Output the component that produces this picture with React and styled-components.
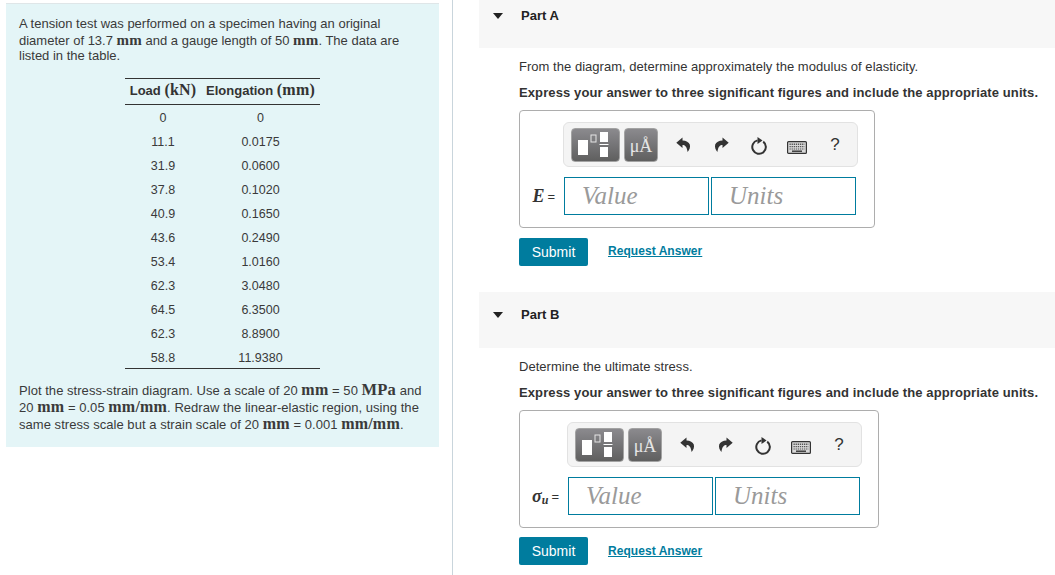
import styled, { createGlobalStyle } from 'styled-components';

const GlobalStyle = createGlobalStyle`
    html, body {
        margin: 0;
        padding: 0;
        background: #fff;
        overflow: hidden;
    }
    body {
        font-family: 'Liberation Sans', Arial, sans-serif;
        color: #333;
    }
`;

const Page = styled.div`
    display: flex;
    width: 1055px;
    height: 575px;
    overflow: hidden;
`;

const ProblemColumn = styled.div`
    width: 453px;
    height: 575px;
    padding: 3px 0 0 6px;
    box-sizing: border-box;
    border-right: 1px solid #c9d5dc;
    flex-shrink: 0;
`;

const ProblemPanel = styled.section`
    width: 433px;
    height: 444px;
    box-sizing: border-box;
    padding: 12px 13px 0;
    background: #e4f5f7;
    border-top: 1px solid #dfe6e8;
`;

const Para = styled.div`
    margin-top: ${(p) => p.$top || 0}px;
    font-size: 13px;
    color: #3a3a3a;
`;

const ParaLine = styled.div`
    height: ${(p) => p.$line || 16}px;
    line-height: ${(p) => p.$line || 16}px;
    letter-spacing: ${(p) => p.$spacing || 0}px;
    white-space: nowrap;
`;

const Unit = styled.span`
    font-family: 'Liberation Serif', 'Times New Roman', serif;
    font-weight: 700;
    font-size: ${(p) => p.$size || 15}px;
    letter-spacing: 0.2px;
`;

const DataTable = styled.table`
    width: 195px;
    margin: 14px auto 0;
    border-collapse: collapse;
    table-layout: fixed;
    border-top: 1px solid #333;
    border-bottom: 1px solid #333;
`;

const HeadCell = styled.th`
    width: ${(p) => p.$width}px;
    height: 26px;
    padding: 0 0 4px;
    box-sizing: border-box;
    font-size: 13px;
    font-weight: 700;
    text-align: center;
    color: #333;
    white-space: nowrap;
    border-bottom: 1px solid #333;
`;

const Cell = styled.td`
    height: 24px;
    padding: 3px 0 0;
    box-sizing: border-box;
    font-size: 12.5px;
    text-align: center;
    color: #3a3a3a;
`;

const PartsColumn = styled.main`
    flex: 1;
    padding-left: 26px;
    min-width: 0;
`;

const PartHeader = styled.header`
    display: flex;
    align-items: flex-start;
    height: ${(p) => (p.$first ? 48 : 56)}px;
    margin-top: ${(p) => (p.$first ? 0 : 26)}px;
    padding-top: ${(p) => (p.$first ? 8 : 15)}px;
    box-sizing: border-box;
    background: #f7f7f7;
`;

const Caret = styled.span`
    width: 0;
    height: 0;
    margin: 5px 18px 0 14px;
    border-left: 5px solid transparent;
    border-right: 5px solid transparent;
    border-top: 6px solid #222;
`;

const PartTitle = styled.h2`
    margin: 0;
    font-size: 13px;
    line-height: 16px;
    font-weight: 700;
    color: #222;
`;

const PartBody = styled.div`
    padding: 11px 0 0 40px;
`;

const Line = styled.p`
    margin: 0 0 ${(p) => (p.$bold ? 9 : 10)}px;
    font-size: 13px;
    line-height: 16px;
    font-weight: ${(p) => (p.$bold ? 700 : 400)};
    letter-spacing: ${(p) => (p.$bold ? 0.11 : 0.03)}px;
    color: #333;
    white-space: nowrap;
`;

const AnswerBox = styled.div`
    display: inline-grid;
    grid-template-columns: ${(p) => p.$label}px 292px;
    row-gap: 10px;
    padding: 11px 18px 12px 0;
    border: 1px solid #adadad;
    border-radius: 4px;
    vertical-align: top;
`;

const Toolbar = styled.div`
    grid-column: 2;
    display: flex;
    align-items: center;
    width: 295px;
    height: 45px;
    margin-left: -1px;
    padding-left: 7px;
    box-sizing: border-box;
    background: #f4f4f4;
    border: 1px solid #e2e2e2;
    border-radius: 6px;
`;

const PaletteButton = styled.div`
    display: flex;
    align-items: center;
    justify-content: center;
    width: ${(p) => p.$width}px;
    height: 34px;
    margin-right: ${(p) => p.$gap || 0}px;
    padding-top: ${(p) => p.$drop || 0}px;
    box-sizing: border-box;
    border: 1px solid #a3a3a3;
    border-radius: 4px;
    background: linear-gradient(#8b8a8e, #5f5f5f);
    color: #e6e6e6;
    font-family: 'Liberation Serif', 'Times New Roman', serif;
    font-size: 18px;
    flex-shrink: 0;
`;

const ToolIcon = styled.div`
    display: flex;
    align-items: center;
    justify-content: center;
    width: 38px;
    height: 34px;
    padding-top: ${(p) => p.$drop || 0}px;
    box-sizing: border-box;
    color: #333;
    font-size: 17px;
    flex-shrink: 0;
`;

const Label = styled.div`
    display: flex;
    align-items: center;
    justify-content: flex-end;
    padding-right: 9px;
    font-size: 13px;
    color: #333;
`;

const MathVar = styled.span`
    font-family: 'Liberation Serif', 'Times New Roman', serif;
    font-style: italic;
    font-weight: 700;
    font-size: 18px;
    margin-right: 3px;
    sub {
        font-size: 12px;
        line-height: 0;
        vertical-align: -2px;
    }
`;

const Fields = styled.div`
    display: flex;
    gap: 2px;
`;

const Field = styled.div`
    width: 145px;
    height: 38px;
    box-sizing: border-box;
    padding-left: 17px;
    border: 1px solid #007c9e;
    background: #fff;
    font-family: 'Liberation Serif', 'Times New Roman', serif;
    font-style: italic;
    font-size: 25px;
    line-height: 36px;
    color: #9a9a9a;
`;

const ActionRow = styled.div`
    display: flex;
    align-items: center;
    gap: 20px;
    margin-top: ${(p) => p.$top}px;
`;

const SubmitButton = styled.button`
    width: 69px;
    height: 28px;
    padding: 0;
    border: 0;
    border-radius: 2px;
    background: #007c9e;
    color: #fff;
    font-family: inherit;
    font-size: 14px;
`;

const RequestLink = styled.a`
    margin-top: ${(p) => p.$shift}px;
    font-size: 12px;
    letter-spacing: 0.05px;
    font-weight: 700;
    color: #007c9e;
    text-decoration: underline;
`;

const rows = [
    ['0', '0'],
    ['11.1', '0.0175'],
    ['31.9', '0.0600'],
    ['37.8', '0.1020'],
    ['40.9', '0.1650'],
    ['43.6', '0.2490'],
    ['53.4', '1.0160'],
    ['62.3', '3.0480'],
    ['64.5', '6.3500'],
    ['62.3', '8.8900'],
    ['58.8', '11.9380'],
];

const TemplatesIcon = () => (
    <svg width='47' height='32' viewBox='0 0 47 32' fill='#fff'>
        <rect x='6' y='11' width='10' height='15' />
        <rect x='19' y='6' width='5' height='7' fill='none' stroke='#e6e6e6' strokeWidth='1' />
        <rect x='28' y='3' width='8' height='10' />
        <rect x='27.5' y='15' width='9' height='1' />
        <rect x='28' y='18' width='8' height='10' />
    </svg>
);

const UndoIcon = ({ flip }) => (
    <svg width='15' height='16' viewBox='0 0 15 16' style={flip ? { transform: 'scaleX(-1)' } : undefined}>
        <path d='M6.5 0.5 L0.3 5.8 L6.5 11 V8 C9 8 10.8 9.5 11.6 15 C13.5 13 14.5 10 13.8 7.5 C13 5 10 3.6 6.5 3.4 Z' fill='#333' />
    </svg>
);

const ResetIcon = () => (
    <svg width='18' height='18' viewBox='0 0 18 18' fill='none'>
        <path d='M7.5 3.4 A6.8 6.8 0 1 0 13.2 4.6' stroke='#333' strokeWidth='2' />
        <path d='M7.5 0 L12.5 3.4 L7.5 7 Z' fill='#333' />
    </svg>
);

const KeyboardIcon = () => (
    <svg width='20' height='13' viewBox='0 0 20 13'>
        <rect x='0.6' y='0.6' width='18.8' height='11.8' rx='1' fill='#d8d8d8' stroke='#333' strokeWidth='1.2' />
        <path d='M2.5 3.2 H17.5 M2.5 5.6 H17.5' stroke='#555' strokeWidth='1.4' strokeDasharray='1.3 0.8' />
        <path d='M2.5 8 H17.5' stroke='#555' strokeWidth='1.2' strokeDasharray='1.3 0.8' />
        <path d='M5 10.2 H15' stroke='#333' strokeWidth='1.4' />
    </svg>
);

const Answer = ({ label, labelWidth }) => (
    <AnswerBox $label={labelWidth}>
        <Toolbar>
            <PaletteButton $width={49} $gap={4}>
                <TemplatesIcon />
            </PaletteButton>
            <PaletteButton $width={34} $gap={6} $drop={3}>μÅ</PaletteButton>
            <ToolIcon><UndoIcon /></ToolIcon>
            <ToolIcon><UndoIcon flip /></ToolIcon>
            <ToolIcon $drop={3}><ResetIcon /></ToolIcon>
            <ToolIcon $drop={5}><KeyboardIcon /></ToolIcon>
            <ToolIcon>?</ToolIcon>
        </Toolbar>
        <Label>{label} =</Label>
        <Fields>
            <Field>Value</Field>
            <Field>Units</Field>
        </Fields>
    </AnswerBox>
);

const Part = ({ title, first, question, label, labelWidth, actionTop, linkShift }) => (
    <>
        <PartHeader $first={first}>
            <Caret />
            <PartTitle>{title}</PartTitle>
        </PartHeader>
        <PartBody>
            <Line>{question}</Line>
            <Line $bold>Express your answer to three significant figures and include the appropriate units.</Line>
            <Answer label={label} labelWidth={labelWidth} />
            <ActionRow $top={actionTop}>
                <SubmitButton>Submit</SubmitButton>
                <RequestLink href='#' $shift={linkShift}>Request Answer</RequestLink>
            </ActionRow>
        </PartBody>
    </>
);

const App = () => (
    <Page>
        <GlobalStyle />
        <ProblemColumn>
            <ProblemPanel>
                <Para>
                    <ParaLine>A tension test was performed on a specimen having an original</ParaLine>
                    <ParaLine>
                        diameter of 13.7 <Unit>mm</Unit> and a gauge length of 50 <Unit>mm</Unit>. The data are
                    </ParaLine>
                    <ParaLine>listed in the table.</ParaLine>
                </Para>
                <DataTable>
                    <thead>
                        <tr>
                            <HeadCell $width={76}>Load <Unit $size={16}>(kN)</Unit></HeadCell>
                            <HeadCell $width={119}>Elongation <Unit $size={16}>(mm)</Unit></HeadCell>
                        </tr>
                    </thead>
                    <tbody>
                        {rows.map(([load, elongation], i) => (
                            <tr key={i}>
                                <Cell>{load}</Cell>
                                <Cell>{elongation}</Cell>
                            </tr>
                        ))}
                    </tbody>
                </DataTable>
                <Para $top={12}>
                    <ParaLine $line={17} $spacing={0.04}>
                        Plot the stress-strain diagram. Use a scale of 20 <Unit $size={16}>mm</Unit> = 50{' '}
                        <Unit $size={16.5}>MPa</Unit> and
                    </ParaLine>
                    <ParaLine $line={17} $spacing={0.04}>
                        20 <Unit $size={16}>mm</Unit> = 0.05 <Unit $size={16}>mm/mm</Unit>. Redraw the linear-elastic
                        region, using the
                    </ParaLine>
                    <ParaLine $line={17} $spacing={0.04}>
                        same stress scale but a strain scale of 20 <Unit $size={16}>mm</Unit> = 0.001{' '}
                        <Unit $size={16}>mm/mm</Unit>.
                    </ParaLine>
                </Para>
            </ProblemPanel>
        </ProblemColumn>
        <PartsColumn>
            <Part
                first
                title='Part A'
                question='From the diagram, determine approximately the modulus of elasticity.'
                label={<MathVar>E</MathVar>}
                labelWidth={44}
                actionTop={10}
                linkShift={-2}
            />
            <Part
                title='Part B'
                question='Determine the ultimate stress.'
                label={<MathVar>σ<sub>u</sub></MathVar>}
                labelWidth={48}
                actionTop={9}
                linkShift={0}
            />
        </PartsColumn>
    </Page>
);

export default App;
